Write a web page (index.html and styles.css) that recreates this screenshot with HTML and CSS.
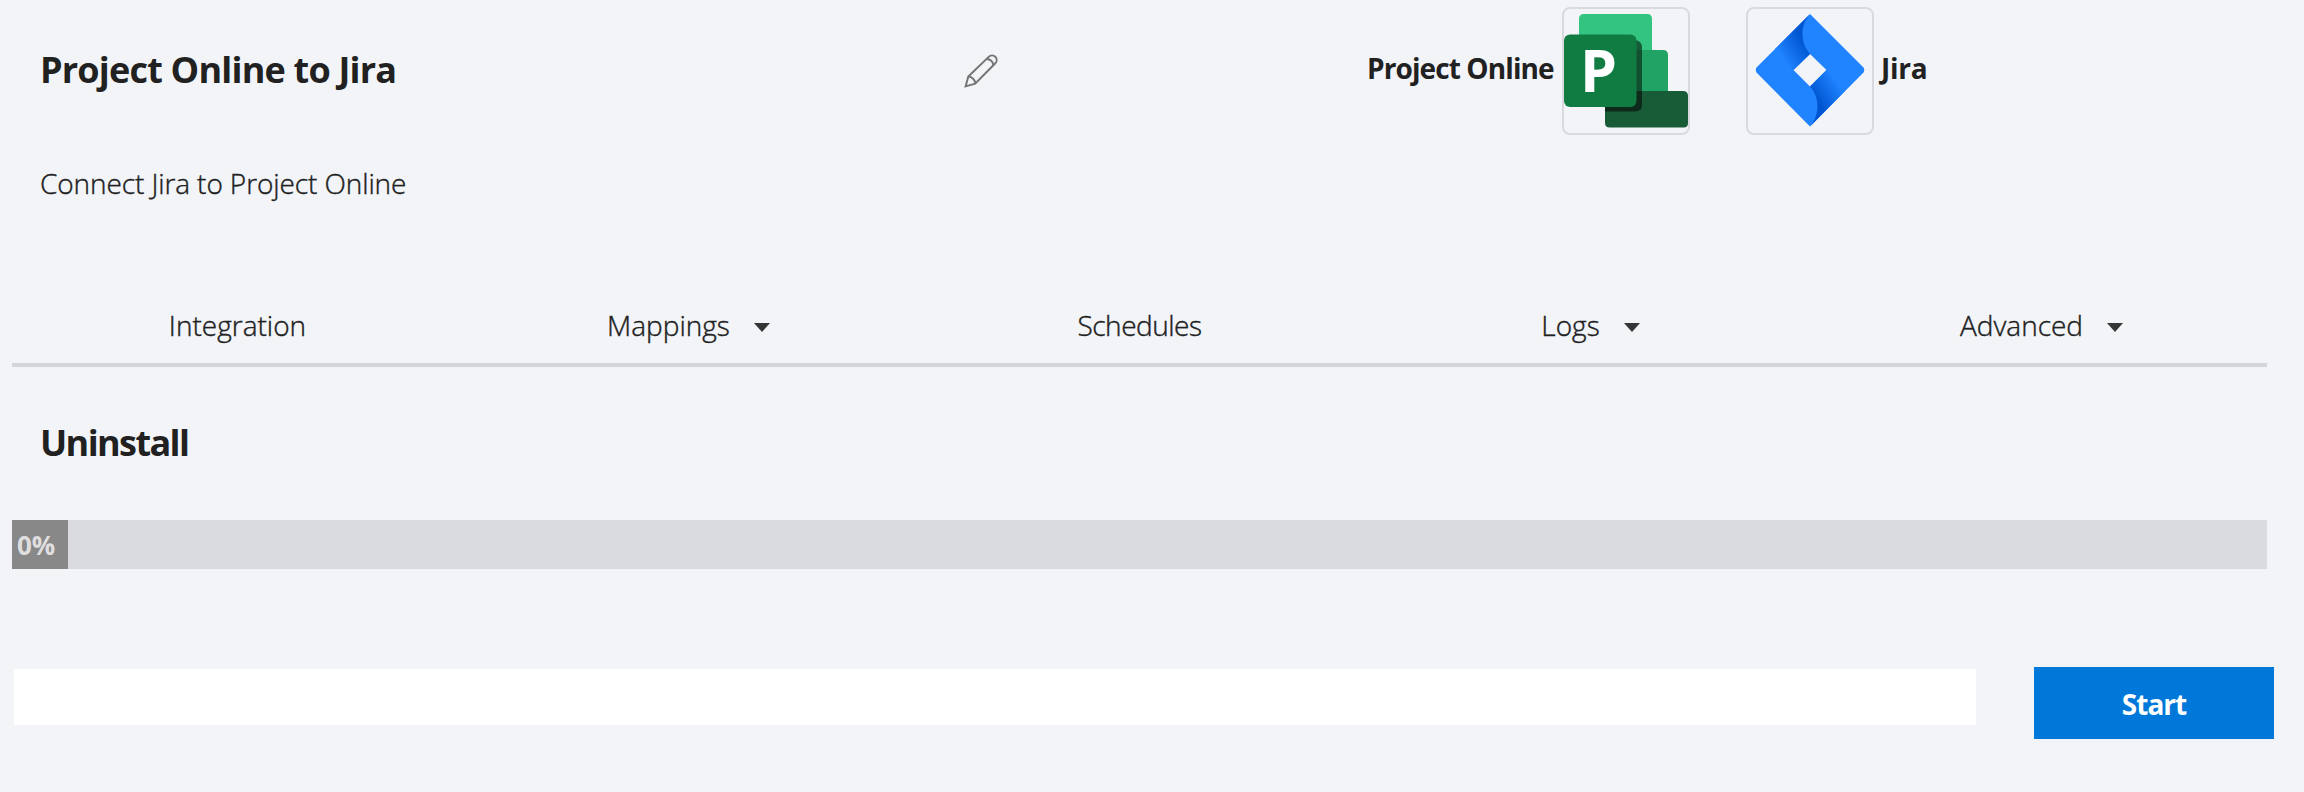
FILE: index.html
```html
<!DOCTYPE html>
<html lang="en">
<head>
    <meta charset="UTF-8">
    <meta name="viewport" content="width=device-width, initial-scale=1.0">
    <title>Project Online to Jira</title>
    <link rel="stylesheet" href="styles.css">
</head>
<body>
    <header class="header">
        <h1 class="title">Project Online to Jira</h1>
        <svg class="edit-icon" viewBox="0 0 34 34" fill="none" stroke="#757575" stroke-width="2">
            <path d="M1.6 32.4L4.3 22.6L24.7 2.9C26.5 1.1 29.4 0.9 31.3 2.7C33.1 4.5 33.1 7.5 31.3 9.3L11.2 29.7Z"/>
            <path d="M4.3 22.6C7.8 22.4 11.4 26.3 11.2 29.7M22.6 4.9C26 4.8 29.4 8 29.3 11.3"/>
        </svg>
        <div class="connectors">
            <span class="connector-name source-name">Project Online</span>
            <div class="logo-box">
                <svg viewBox="0 0 124 124">
                    <path fill="#33c481" d="M20 5H83Q88 5 88 10V41H15V10Q15 5 20 5Z"/>
                    <path fill="#21a366" d="M60 41H99Q104 41 104 46V82H60Z"/>
                    <path fill="#185c37" d="M41 82H119Q124 82 124 87V114Q124 118.500 119.500 118.500H46Q41 118.500 41 114Z"/>
                    <path fill="#155c39" d="M72 31Q78 33 78 38V41H72Z"/>
                    <path fill="#12502f" d="M72 41H78V82H72Z"/>
                    <path fill="#0e2a1a" d="M41 82H78V96Q78 102.500 71 102.500H41Z"/>
                    <rect fill="#107c41" y="25.500" width="72.500" height="72.500" rx="6"/>
                    <text class="logo-letter" x="16" y="82.500">P</text>
                </svg>
            </div>
            <div class="logo-box">
                <svg viewBox="0 0 124 124">
                    <defs>
                        <linearGradient id="jiraTop" gradientUnits="userSpaceOnUse" x1="61" y1="31" x2="34" y2="48">
                            <stop offset="0.15" stop-color="#0055d0"/>
                            <stop offset="1" stop-color="#2083ff"/>
                        </linearGradient>
                        <linearGradient id="jiraBottom" gradientUnits="userSpaceOnUse" x1="64" y1="93" x2="91" y2="76">
                            <stop offset="0.15" stop-color="#0055d0"/>
                            <stop offset="1" stop-color="#2083ff"/>
                        </linearGradient>
                    </defs>
                    <path fill="#2083ff" fill-rule="evenodd" d="M62 5L115.500 58.500Q117 61 115.500 63.500L62 117.500L8.500 63.500Q7 61 8.500 58.500ZM62 45L45.500 61L62 77.500L78.500 61Z"/>
                    <path fill="url(#jiraTop)" d="M62 5C52 16 52 34 62 45L45.500 61L27 40Z"/>
                    <path fill="url(#jiraBottom)" d="M62 117.500C72 106 72 88 62 77.500L78.500 61L97 82Z"/>
                </svg>
            </div>
            <span class="connector-name target-name">Jira</span>
        </div>
    </header>

    <p class="description">Connect Jira to Project Online</p>

    <nav class="tabs">
        <div class="tab">Integration</div>
        <div class="tab">Mappings<span class="caret"></span></div>
        <div class="tab tab-schedules">Schedules</div>
        <div class="tab">Logs<span class="caret"></span></div>
        <div class="tab">Advanced<span class="caret"></span></div>
    </nav>

    <main>
        <h2 class="section-title">Uninstall</h2>
        <div class="progress">
            <div class="progress-bar">0%</div>
        </div>
        <div class="actions">
            <input class="log-input" type="text">
            <button class="start-button">Start</button>
        </div>
    </main>
</body>
</html>
```

FILE: styles.css
```css
* {
    box-sizing: border-box;
}
body {
    margin: 0;
    padding: 7px 30px 0 12px;
    background-color: #f2f4f8;
    color: #212121;
    font-family: "Segoe UI", "Open Sans", "Noto Sans", sans-serif;
    font-size: 28px;
}
.header {
    display: grid;
    grid-template-columns: 923px 34px 1fr;
    align-items: center;
    height: 128px;
    padding-left: 28px;
}
.title,
.section-title {
    margin: 0;
    font-size: 36px;
    font-weight: 700;
    line-height: 48px;
}
.title {
    padding-bottom: 2px;
    letter-spacing: -0.8px;
}
.edit-icon {
    width: 34px;
    height: 34px;
    margin-left: 1px;
}
.connectors {
    display: flex;
    align-items: center;
    padding-left: 370px;
}
.connector-name {
    padding-bottom: 7px;
    font-weight: 700;
    line-height: 38px;
    white-space: nowrap;
}
.source-name {
    width: 195px;
    letter-spacing: -0.9px;
}
.target-name {
    letter-spacing: -0.3px;
}
.logo-box {
    flex: none;
    width: 128px;
    height: 128px;
    border: 2px solid #d8dade;
    border-radius: 8px;
}
.logo-box + .logo-box {
    margin-left: 56px;
    margin-right: 7px;
}
.logo-box svg {
    display: block;
}
.logo-letter {
    fill: #fff;
    font-size: 59px;
    font-weight: 700;
}
.description {
    margin: 29px 0 0 28px;
    line-height: 38px;
    letter-spacing: -0.1px;
}
.description,
.tabs {
    font-weight: 300;
    -webkit-text-stroke: 0.4px #212121;
}
.tabs {
    display: grid;
    grid-template-columns: repeat(5, 1fr);
    width: 2255px;
    height: 80px;
    margin-top: 85px;
    border-bottom: 4px solid #d4d5d9;
}
.tab {
    display: flex;
    align-items: center;
    justify-content: center;
}
.tab-schedules {
    letter-spacing: -0.5px;
}
.caret {
    margin: 4px 0 0 24px;
    border: 8px solid transparent;
    border-top: 9px solid #343635;
    border-bottom: 0;
}
.section-title {
    margin: 52px 0 53px 28px;
    letter-spacing: -1.6px;
}
.progress {
    width: 2255px;
    height: 49px;
    background-color: #dadbdf;
}
.progress-bar {
    width: 56px;
    height: 49px;
    padding-left: 5px;
    background-color: #888;
    color: #dfdfdf;
    font-size: 26px;
    font-weight: 700;
    line-height: 51px;
}
.actions {
    display: flex;
    align-items: flex-start;
    justify-content: space-between;
    margin-top: 98px;
}
.log-input {
    width: 1962px;
    height: 56px;
    margin: 2px 0 0 2px;
    border: 0;
    background-color: #fff;
}
.start-button {
    width: 240px;
    height: 72px;
    padding: 2px 0 0;
    border: 0;
    background-color: #0078d9;
    color: #fff;
    font-family: inherit;
    font-size: 28px;
    font-weight: 700;
    letter-spacing: -1px;
}
```
